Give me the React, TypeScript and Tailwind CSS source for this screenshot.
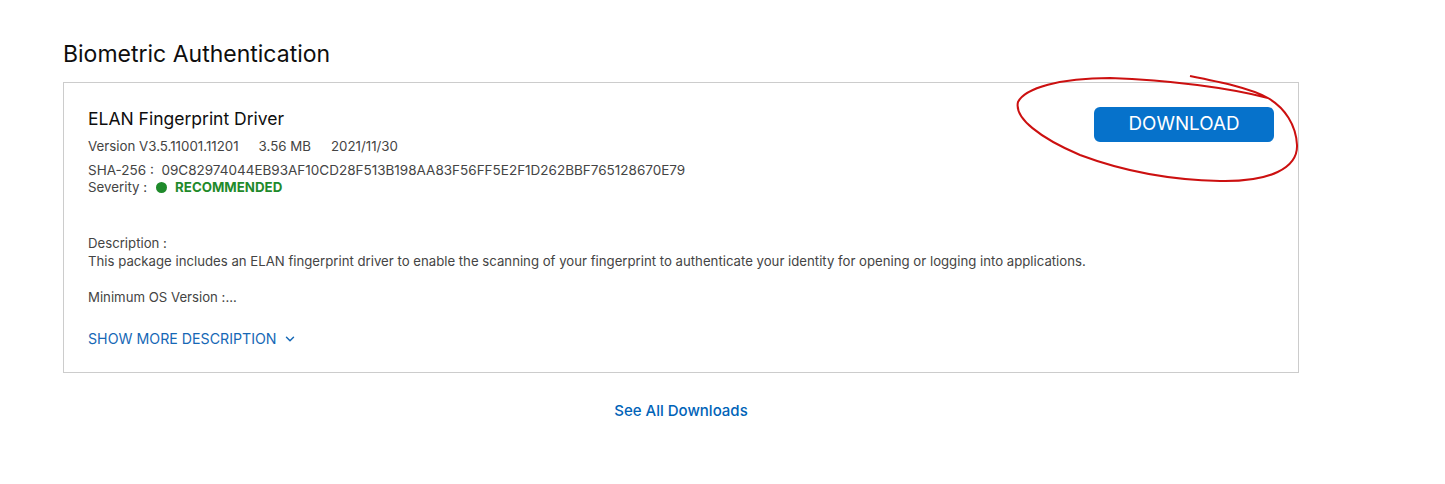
import { ChevronDown } from "lucide-react";

const font = { fontFamily: "Inter, 'Noto Sans', sans-serif" };

export default function App() {
  return (
    <div className="relative min-h-[484px] w-[1445px] bg-white text-[#444]" style={font}>
      <div className="pl-[63px] pt-[39px] w-[1299px]">
        <h2 className="text-[23px] leading-[30px] text-[#0e0e0e]">Biometric Authentication</h2>

        <div className="mt-[13px] border border-[#ccc] px-[24px] pt-[24px] pb-[23px]">
          <div className="flex justify-between">
            <div>
              <h3 className="text-[17.5px] leading-[24px] text-[#0e0e0e]">ELAN Fingerprint Driver</h3>
              <div className="mt-[5px] flex gap-[20px] text-[13.3px] leading-[20px]">
                <span>Version V3.5.11001.11201</span>
                <span>3.56 MB</span>
                <span>2021/11/30</span>
              </div>
              <div className="mt-[6px] text-[13.5px] leading-[17px]">
                SHA-256 :&nbsp; 09C82974044EB93AF10CD28F513B198AA83F56FF5E2F1D262BBF765128670E79
              </div>
              <div className="flex items-center text-[13.3px] leading-[17px]">
                <span>Severity :</span>
                <span className="ml-[9px] mr-[8px] inline-block h-[11px] w-[11px] rounded-full bg-[#1f8a2b]" />
                <span className="font-bold text-[#1f8a2b]">RECOMMENDED</span>
              </div>
            </div>
            <button className="h-[35px] w-[180px] rounded-[6px] bg-[#0672cb] text-[18.8px] text-white">
              DOWNLOAD
            </button>
          </div>

          <div className="mt-[38px] text-[13.2px] leading-[18px]">
            <div>Description :</div>
            <div>
              This package includes an ELAN fingerprint driver to enable the scanning of your fingerprint to
              authenticate your identity for opening or logging into applications.
            </div>
            <div className="mt-[18px]">Minimum OS Version :...</div>
          </div>

          <button className="mt-[23px] flex items-center gap-[6px] text-[14.2px] leading-[20px] text-[#1668b6]">
            SHOW MORE DESCRIPTION
            <ChevronDown size={14} strokeWidth={2.5} />
          </button>
        </div>

        <div className="mt-[25px] text-center">
          <a className="text-[15px] font-medium text-[#0063b8]">See All Downloads</a>
        </div>
      </div>

      <svg className="pointer-events-none absolute left-0 top-0" width="1445" height="484">
        <path
          d="M1190 76 C1220 82 1250 88 1268 98 C1230 88 1170 80 1110 78 C1060 78 1025 88 1018 102 C1014 118 1040 138 1080 155 C1120 170 1170 180 1220 181 C1270 182 1298 168 1297 145 C1296 125 1285 108 1268 98"
          fill="none"
          stroke="#cc1010"
          strokeWidth="2"
        />
      </svg>
    </div>
  );
}
